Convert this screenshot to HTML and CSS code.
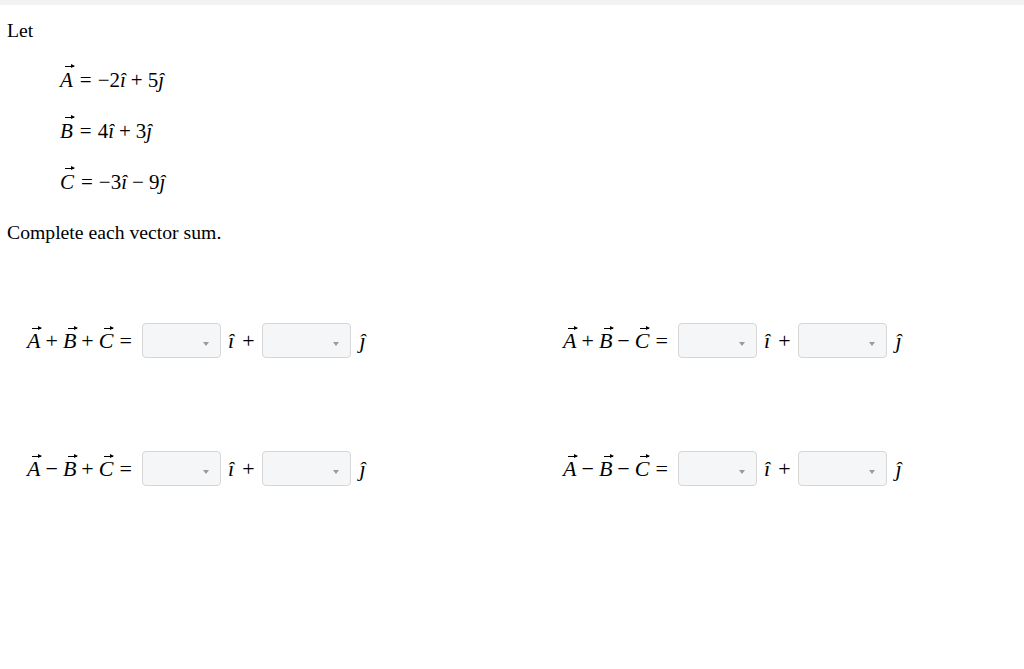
FILE: index.html
```html
<!DOCTYPE html>
<html>
<head>
<meta charset="utf-8">
<link rel="stylesheet" href="styles.css">
</head>
<body>
<div class="topbar"></div>
<main class="content">
  <p class="text let">Let</p>
  <div class="given">
    <div class="eq"><span class="vec">A</span><span class="rel">=</span>−2<i>î</i><span class="bin">+</span>5<i>ĵ</i></div>
    <div class="eq"><span class="vec">B</span><span class="rel">=</span>4<i>î</i><span class="bin">+</span>3<i>ĵ</i></div>
    <div class="eq"><span class="vec">C</span><span class="rel">=</span>−3<i>î</i><span class="bin">−</span>9<i>ĵ</i></div>
  </div>
  <p class="text complete">Complete each vector sum.</p>
  <div class="sums">
    <div class="sum">
      <span class="label"><span class="mvec">A</span><span class="op">+</span><span class="mvec">B</span><span class="op">+</span><span class="mvec">C</span><span class="op eqop">=</span></span>
      <span class="select s1"><span class="caret"></span></span>
      <span class="unit"><i>î</i><span class="op">+</span></span>
      <span class="select s2"><span class="caret"></span></span>
      <span class="unit last"><i>ĵ</i></span>
    </div>
    <div class="sum">
      <span class="label"><span class="mvec">A</span><span class="op">+</span><span class="mvec">B</span><span class="op">−</span><span class="mvec">C</span><span class="op eqop">=</span></span>
      <span class="select s1"><span class="caret"></span></span>
      <span class="unit"><i>î</i><span class="op">+</span></span>
      <span class="select s2"><span class="caret"></span></span>
      <span class="unit last"><i>ĵ</i></span>
    </div>
    <div class="sum">
      <span class="label"><span class="mvec">A</span><span class="op">−</span><span class="mvec">B</span><span class="op">+</span><span class="mvec">C</span><span class="op eqop">=</span></span>
      <span class="select s1"><span class="caret"></span></span>
      <span class="unit"><i>î</i><span class="op">+</span></span>
      <span class="select s2"><span class="caret"></span></span>
      <span class="unit last"><i>ĵ</i></span>
    </div>
    <div class="sum">
      <span class="label"><span class="mvec">A</span><span class="op">−</span><span class="mvec">B</span><span class="op">−</span><span class="mvec">C</span><span class="op eqop">=</span></span>
      <span class="select s1"><span class="caret"></span></span>
      <span class="unit"><i>î</i><span class="op">+</span></span>
      <span class="select s2"><span class="caret"></span></span>
      <span class="unit last"><i>ĵ</i></span>
    </div>
  </div>
</main>
</body>
</html>
```

FILE: styles.css
```css
html, body {
  margin: 0;
  padding: 0;
  background: #ffffff;
}
body {
  font-family: "Liberation Serif", "Times New Roman", serif;
  font-size: 19.7px;
  color: #000;
}
.topbar {
  height: 5px;
  background: #f2f2f2;
}
.content {
  padding: 0 7px;
}
.text {
  margin: 0;
  line-height: 20px;
}
.let {
  margin-top: 15px;
}
.given {
  margin: 30px 0 0 53px;
  display: flex;
  flex-direction: column;
  gap: 31px;
}
.eq {
  line-height: 20px;
  font-size: 21px;
  white-space: nowrap;
}
.rel {
  margin: 0 6px 0 7px;
}
.bin {
  margin: 0 5px;
}
.vec {
  font-style: italic;
  position: relative;
  display: inline-block;
}
.vec::before {
  content: "";
  position: absolute;
  left: 5px;
  top: -4px;
  width: 9px;
  height: 1px;
  background: #000;
}
.vec::after {
  content: "";
  position: absolute;
  left: 11px;
  top: -6px;
  border-left: 4px solid #000;
  border-top: 2.5px solid transparent;
  border-bottom: 2.5px solid transparent;
}
.complete {
  margin-top: 30px;
}
.sums {
  margin: 81px 0 0 20px;
  display: grid;
  grid-template-columns: 536px 440px;
  row-gap: 93px;
}
.sum {
  display: flex;
  align-items: center;
  height: 35px;
  font-size: 22px;
  white-space: nowrap;
}
.label {
  display: inline-flex;
  align-items: center;
  width: 115px;
}
.mvec {
  font-style: italic;
  position: relative;
  display: inline-block;
  line-height: 20px;
}
.mvec::before {
  content: "";
  position: absolute;
  left: 5px;
  top: -3px;
  width: 9px;
  height: 1px;
  background: #000;
}
.mvec::after {
  content: "";
  position: absolute;
  left: 11px;
  top: -5px;
  border-left: 4px solid #000;
  border-top: 2.5px solid transparent;
  border-bottom: 2.5px solid transparent;
}
.op {
  margin: 0 5px;
}
.eqop {
  margin-left: 6px;
  margin-right: 0;
}
.select {
  position: relative;
  display: inline-block;
  box-sizing: border-box;
  height: 35px;
  border: 1px solid #d6d6d6;
  border-radius: 4px;
  background: #f5f6f8;
}
.s1 {
  width: 79px;
}
.s2 {
  width: 89px;
}
.caret {
  position: absolute;
  right: 11px;
  top: 18px;
  border-top: 4px solid #9a9a9a;
  border-left: 3.5px solid transparent;
  border-right: 3.5px solid transparent;
}
.unit {
  display: inline-flex;
  align-items: center;
  margin: 0 7px 0 7px;
}
.unit.last {
  margin-left: 9px;
}
.unit .op {
  margin: 0 0 0 8px;
}
.unit i {
  font-style: italic;
}
```
